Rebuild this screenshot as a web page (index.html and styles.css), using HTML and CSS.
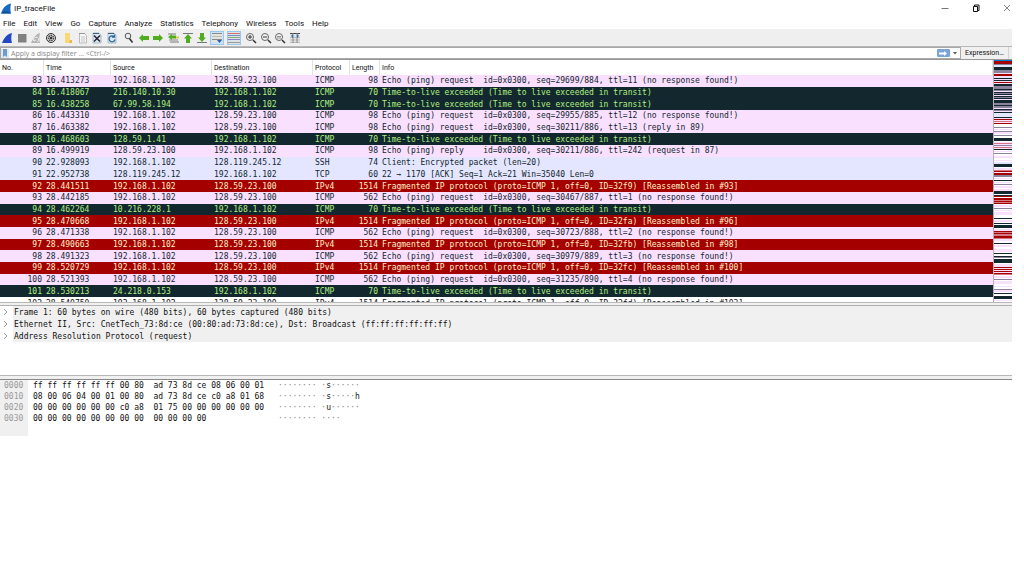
FILE: index.html
```html
<!DOCTYPE html>
<html lang="en">
<head>
  <meta charset="UTF-8" />
  <meta name="viewport" content="width=device-width, initial-scale=1.0" />
  <title>IP_traceFile</title>
  <link rel="stylesheet" href="styles.css">
</head>
<body>
  <header class="titlebar">
    <svg class="logo" viewBox="0 0 12 12"><path d="M0 11.500C2 5.500 5 1.500 11 .500C10 4 10 8 11 11.500z" fill="#1769c0"/><path d="M0 11.500C3 8 7 8 11 11.500z" fill="#0e4f98"/></svg>
    <h1>IP_traceFile</h1>
    <div class="window-buttons">
      <button aria-label="Minimize"><svg viewBox="0 0 8 8"><path d="M.500 4.500h7" stroke="#777"/></svg></button>
      <button aria-label="Restore"><svg viewBox="0 0 8 8"><path d="M1.500 2.500h4v5h-4zM2.500 2V1h4.500v5.500H6" fill="none" stroke="#111"/></svg></button>
      <button aria-label="Close"><svg viewBox="0 0 8 8"><path d="M1 1l6 6M7 1L1 7" stroke="#666" stroke-width=".8"/></svg></button>
    </div>
  </header>

  <nav class="menu">
    <a href="#">File</a>
    <a href="#">Edit</a>
    <a href="#">View</a>
    <a href="#">Go</a>
    <a href="#">Capture</a>
    <a href="#">Analyze</a>
    <a href="#">Statistics</a>
    <a href="#">Telephony</a>
    <a href="#">Wireless</a>
    <a href="#">Tools</a>
    <a href="#">Help</a>
  </nav>

  <div class="toolbar">
    <div class="group four">
      <button aria-label="Start capture"><svg viewBox="0 0 12 12"><path d="M1 11C3 6 6 2 11 1C10 4 10 8 11 11z" fill="#2448c4"/></svg></button>
      <button aria-label="Stop capture"><svg viewBox="0 0 12 12"><path d="M2 2h8.500v8.500H2z" fill="#808080"/></svg></button>
      <button aria-label="Restart capture"><svg viewBox="0 0 12 12"><path d="M1 11C3 6 6 2 10 1C9 4 9 8 10 11z" fill="#b4b4b4"/><path d="M4 9a2.500 2.500 0 1 1 3 1M3 7l1 2 2-1" fill="none" stroke="#eee"/></svg></button>
      <button aria-label="Capture options"><svg viewBox="0 0 12 12"><circle cx="6" cy="6" r="4.500" fill="#ddd" stroke="#333"/><circle cx="6" cy="6" r="2.500" fill="none" stroke="#444" stroke-width="1.500" stroke-dasharray="1.500 .700"/><circle cx="6" cy="6" r="1.300" fill="#333"/></svg></button>
    </div>
    <div class="group four">
      <button aria-label="Open"><svg viewBox="0 0 12 12"><path d="M3 1h5v7h2v3H3z" fill="#f8d878"/><path d="M8 8h2v3H7z" fill="#e8b84c"/></svg></button>
      <button aria-label="Save"><svg viewBox="0 0 12 12"><path d="M2.500 1.500h5l2 2v7.500h-7z" fill="#f6f6f6" stroke="#bbb"/><path d="M2 1.500h6" stroke="#999"/><path d="M4 5h4M4 7h4M4 9h4" stroke="#c4c4c4"/></svg></button>
      <button aria-label="Close file"><svg viewBox="0 0 12 12"><path d="M2 1h6l2 2v8H2z" fill="#dce8f0" stroke="#88a0b0" stroke-width=".6"/><path d="M2 1.500h6" stroke="#38627e"/><path d="M3 3.500l6 6M9 3.500l-6 6" stroke="#223" stroke-width="1.500"/></svg></button>
      <button aria-label="Reload"><svg viewBox="0 0 12 12"><path d="M2 1h6l2 2v8H2z" fill="#dce8f0" stroke="#88a0b0" stroke-width=".6"/><path d="M2 1.500h6" stroke="#38627e"/><path d="M8.500 5a3 3 0 1 0 .500 2.500M8.500 2.500V5H6" fill="none" stroke="#28669c" stroke-width="1.300"/></svg></button>
    </div>
    <div class="group seven">
      <button aria-label="Find packet"><svg viewBox="0 0 12 12"><circle cx="5" cy="4" r="2.800" fill="#e8eef2" stroke="#555"/><path d="M6.500 6.500l3 4" stroke="#333" stroke-width="1.600"/></svg></button>
      <button aria-label="Previous packet"><svg viewBox="0 0 12 12"><path d="M1 6l4-4v2h6v4H5v2z" fill="#52ac22"/></svg></button>
      <button aria-label="Next packet"><svg viewBox="0 0 12 12"><path d="M11 6L7 2v2H1v4h6v2z" fill="#52ac22"/></svg></button>
      <button aria-label="Go to packet"><svg viewBox="0 0 12 12"><path d="M1 2h8M3 10h9" stroke="#777"/><path d="M7 5.500h5" stroke="#e0c850" stroke-width="2"/><path d="M2 8h9" stroke="#888"/><path d="M1 5l4-3v1.500h4v3H5V8z" fill="#52ac22"/></svg></button>
      <button aria-label="First packet"><svg viewBox="0 0 12 12"><path d="M1 1.500h10" stroke="#777"/><path d="M6 2l4 4.500H8V11H4V6.500H2z" fill="#52ac22"/></svg></button>
      <button aria-label="Last packet"><svg viewBox="0 0 12 12"><path d="M1 10.500h10" stroke="#777"/><path d="M6 10l4-4.500H8V1H4v4.500H2z" fill="#52ac22"/></svg></button>
      <button class="pressed" aria-label="Auto scroll"><svg viewBox="0 0 12 12"><path d="M1 1h10v9H1z" fill="#e4e4dc"/><path d="M1 1.500h10M1 7.500h10" stroke="#888"/><path d="M1 4.500h10" stroke="#bbb"/><path d="M6 8h5L8.500 11z" fill="#2d5eac"/></svg></button>
    </div>
    <div class="group">
      <button class="pressed" aria-label="Colorize"><svg viewBox="0 0 12 12"><path d="M0 0h12v12H0z" fill="#dce4e8"/><path d="M0 1.500h12" stroke="#d07070"/><path d="M0 3.500h12" stroke="#6c90c8"/><path d="M0 5.500h12" stroke="#80b080"/><path d="M0 7.500h12" stroke="#8c80c0"/><path d="M0 10.500h12" stroke="#999"/></svg></button>
    </div>
    <div class="group four">
      <button aria-label="Zoom in"><svg viewBox="0 0 12 12"><circle cx="5" cy="5" r="3.500" fill="#f4f4f4" stroke="#666"/><path d="M3 5h4M5 3v4" stroke="#333"/><path d="M8 8l3 3" stroke="#333" stroke-width="1.500"/></svg></button>
      <button aria-label="Zoom out"><svg viewBox="0 0 12 12"><circle cx="5" cy="5" r="3.500" fill="#f4f4f4" stroke="#666"/><path d="M3 5h4" stroke="#333"/><path d="M8 8l3 3" stroke="#333" stroke-width="1.500"/></svg></button>
      <button aria-label="Normal size"><svg viewBox="0 0 12 12"><circle cx="5" cy="5" r="3.500" fill="#f4f4f4" stroke="#666"/><path d="M3 4.500h4M3 6h4" stroke="#777" stroke-width=".8"/><path d="M8 8l3 3" stroke="#333" stroke-width="1.500"/></svg></button>
      <button aria-label="Resize columns"><svg viewBox="0 0 12 12"><path d="M1 1h10v10H1z" fill="#e4e4e4"/><path d="M1 1.500h10" stroke="#444"/><path d="M1 10.500h10M1 5.500h10M1 8h10" stroke="#bbb"/><path d="M4 1v10M8 1v10" stroke="#888"/><path d="M2 4l2-2v4zM10 4L8 2v4z" fill="#2d6cb4"/></svg></button>
    </div>
  </div>

  <form class="filter">
    <div class="filter-box">
      <svg class="bookmark" viewBox="0 0 6 9"><path d="M1 0h4v8L3 6.500 1 8z" fill="#6c9cd0"/></svg>
      <input type="text" aria-label="Display filter" placeholder="Apply a display filter … &lt;Ctrl-/&gt;">
      <button type="button" class="apply" aria-label="Apply filter"><svg viewBox="0 0 12 7"><path d="M2 3.500h6" stroke="#fff" stroke-width="2"/><path d="M7 1l3 2.500L7 6z" fill="#fff"/></svg></button>
      <button type="button" class="recent" aria-label="Recent filters"><svg viewBox="0 0 6 4"><path d="M1 1h4L3 3.500z" fill="#555"/></svg></button>
    </div>
    <button type="button" class="expression">Expression…</button>
  </form>

  <main>
    <section class="packets">
      <div class="packet-list">
        <table>
          <colgroup>
            <col class="c-no"><col class="c-time"><col class="c-addr"><col class="c-addr"><col class="c-proto"><col class="c-len"><col>
          </colgroup>
          <thead>
            <tr><th>No.</th><th>Time</th><th>Source</th><th>Destination</th><th>Protocol</th><th>Length</th><th>Info</th></tr>
          </thead>
          <tbody>
            <tr class="icmp"><td>83</td><td>16.413273</td><td>192.168.1.102</td><td>128.59.23.100</td><td>ICMP</td><td>98</td><td>Echo (ping) request  id=0x0300, seq=29699/884, ttl=11 (no response found!)</td></tr>
            <tr class="error"><td>84</td><td>16.418067</td><td>216.140.10.30</td><td>192.168.1.102</td><td>ICMP</td><td>70</td><td>Time-to-live exceeded (Time to live exceeded in transit)</td></tr>
            <tr class="error"><td>85</td><td>16.438258</td><td>67.99.58.194</td><td>192.168.1.102</td><td>ICMP</td><td>70</td><td>Time-to-live exceeded (Time to live exceeded in transit)</td></tr>
            <tr class="icmp"><td>86</td><td>16.443310</td><td>192.168.1.102</td><td>128.59.23.100</td><td>ICMP</td><td>98</td><td>Echo (ping) request  id=0x0300, seq=29955/885, ttl=12 (no response found!)</td></tr>
            <tr class="icmp"><td>87</td><td>16.463382</td><td>192.168.1.102</td><td>128.59.23.100</td><td>ICMP</td><td>98</td><td>Echo (ping) request  id=0x0300, seq=30211/886, ttl=13 (reply in 89)</td></tr>
            <tr class="error"><td>88</td><td>16.468603</td><td>128.59.1.41</td><td>192.168.1.102</td><td>ICMP</td><td>70</td><td>Time-to-live exceeded (Time to live exceeded in transit)</td></tr>
            <tr class="icmp"><td>89</td><td>16.499919</td><td>128.59.23.100</td><td>192.168.1.102</td><td>ICMP</td><td>98</td><td>Echo (ping) reply    id=0x0300, seq=30211/886, ttl=242 (request in 87)</td></tr>
            <tr class="tcp"><td>90</td><td>22.928093</td><td>192.168.1.102</td><td>128.119.245.12</td><td>SSH</td><td>74</td><td>Client: Encrypted packet (len=20)</td></tr>
            <tr class="tcp"><td>91</td><td>22.952738</td><td>128.119.245.12</td><td>192.168.1.102</td><td>TCP</td><td>60</td><td>22 → 1170 [ACK] Seq=1 Ack=21 Win=35040 Len=0</td></tr>
            <tr class="frag"><td>92</td><td>28.441511</td><td>192.168.1.102</td><td>128.59.23.100</td><td>IPv4</td><td>1514</td><td>Fragmented IP protocol (proto=ICMP 1, off=0, ID=32f9) [Reassembled in #93]</td></tr>
            <tr class="icmp"><td>93</td><td>28.442185</td><td>192.168.1.102</td><td>128.59.23.100</td><td>ICMP</td><td>562</td><td>Echo (ping) request  id=0x0300, seq=30467/887, ttl=1 (no response found!)</td></tr>
            <tr class="error"><td>94</td><td>28.462264</td><td>10.216.228.1</td><td>192.168.1.102</td><td>ICMP</td><td>70</td><td>Time-to-live exceeded (Time to live exceeded in transit)</td></tr>
            <tr class="frag"><td>95</td><td>28.470668</td><td>192.168.1.102</td><td>128.59.23.100</td><td>IPv4</td><td>1514</td><td>Fragmented IP protocol (proto=ICMP 1, off=0, ID=32fa) [Reassembled in #96]</td></tr>
            <tr class="icmp"><td>96</td><td>28.471338</td><td>192.168.1.102</td><td>128.59.23.100</td><td>ICMP</td><td>562</td><td>Echo (ping) request  id=0x0300, seq=30723/888, ttl=2 (no response found!)</td></tr>
            <tr class="frag"><td>97</td><td>28.490663</td><td>192.168.1.102</td><td>128.59.23.100</td><td>IPv4</td><td>1514</td><td>Fragmented IP protocol (proto=ICMP 1, off=0, ID=32fb) [Reassembled in #98]</td></tr>
            <tr class="icmp"><td>98</td><td>28.491323</td><td>192.168.1.102</td><td>128.59.23.100</td><td>ICMP</td><td>562</td><td>Echo (ping) request  id=0x0300, seq=30979/889, ttl=3 (no response found!)</td></tr>
            <tr class="frag"><td>99</td><td>28.520729</td><td>192.168.1.102</td><td>128.59.23.100</td><td>IPv4</td><td>1514</td><td>Fragmented IP protocol (proto=ICMP 1, off=0, ID=32fc) [Reassembled in #100]</td></tr>
            <tr class="icmp"><td>100</td><td>28.521393</td><td>192.168.1.102</td><td>128.59.23.100</td><td>ICMP</td><td>562</td><td>Echo (ping) request  id=0x0300, seq=31235/890, ttl=4 (no response found!)</td></tr>
            <tr class="error"><td>101</td><td>28.530213</td><td>24.218.0.153</td><td>192.168.1.102</td><td>ICMP</td><td>70</td><td>Time-to-live exceeded (Time to live exceeded in transit)</td></tr>
            <tr><td>102</td><td>28.540750</td><td>192.168.1.102</td><td>128.59.23.100</td><td>IPv4</td><td>1514</td><td>Fragmented IP protocol (proto=ICMP 1, off=0, ID=32fd) [Reassembled in #103]</td></tr>
          </tbody>
        </table>
      </div>
      <!-- packet colours along the scroll bar -->
      <svg class="minimap" viewBox="0 0 18 242" preserveAspectRatio="none" shape-rendering="crispEdges">
        <path fill="#fff" d="M0 0h18v242H0z"/>
        <path fill="#fae0ff" d="M0 4h18v60H0zM0 69h18v1H0zM0 72h18v2H0zM0 82h18v7H0zM0 91h18v1H0zM0 96h18v2H0zM0 100h18v1H0zM0 108h18v8H0zM0 118h18v1H0zM0 122h18v1H0zM0 126h18v2H0zM0 129h18v2H0zM0 145h18v2H0zM0 150h18v1H0zM0 152h18v3H0zM0 160h18v2H0zM0 169h18v2H0zM0 179h18v2H0zM0 185h18v2H0zM0 189h18v3H0zM0 204h18v11H0zM0 216h18v2H0zM0 221h18v3H0zM0 226h18v1H0zM0 230h18v2H0zM0 240h18v1H0z"/>
        <path fill="#e4e6ff" d="M0 5h18v2H0zM0 17h18v1H0zM0 52h18v5H0zM0 102h18v2H0z"/>
        <path fill="#8c849e" d="M0 4h18v1H0zM0 10h18v3H0zM0 26h18v5H0zM0 33h18v1H0zM0 37h18v1H0zM0 43h18v5H0zM0 50h18v1H0zM0 67h18v1H0zM0 71h18v1H0zM0 75h18v1H0zM0 85h18v1H0zM0 93h18v1H0zM0 115h18v2H0zM0 124h18v1H0zM0 148h18v1H0zM0 197h18v1H0zM0 219h18v1H0zM0 229h18v1H0z"/>
        <path fill="#12272e" d="M0 7h18v3H0zM0 18h18v1H0zM0 20h18v1H0zM0 24h18v2H0zM0 29h18v1H0zM0 32h18v1H0zM0 34h18v1H0zM0 36h18v1H0zM0 38h18v1H0zM0 40h18v3H0zM0 45h18v1H0zM0 49h18v1H0zM0 52h18v1H0zM0 57h18v1H0zM0 78h18v3H0zM0 89h18v1H0zM0 104h18v3H0zM0 120h18v1H0zM0 131h18v3H0zM0 135h18v1H0zM0 158h18v1H0zM0 163h18v1H0zM0 165h18v3H0zM0 183h18v1H0zM0 193h18v1H0zM0 196h18v1H0zM0 199h18v4H0zM0 233h18v1H0zM0 236h18v3H0z"/>
        <path fill="#d47884" d="M0 61h18v1H0zM0 83h18v1H0zM0 87h18v1H0zM0 110h18v1H0zM0 138h18v5H0zM0 171h18v5H0zM0 178h18v1H0zM0 214h18v1H0z"/>
        <path fill="#a40000" d="M0 1h18v3H0zM0 14h18v2H0zM0 22h18v1H0zM0 59h18v1H0zM0 63h18v1H0zM0 111h18v1H0zM0 113h18v2H0zM0 136h18v1H0zM0 138h18v2H0zM0 141h18v1H0zM0 143h18v1H0zM0 171h18v1H0zM0 173h18v1H0zM0 176h18v2H0zM0 207h18v1H0zM0 209h18v1H0zM0 211h18v1H0zM0 213h18v1H0z"/>
        <path fill="#0078d7" d="M0 0h18v1H0z"/>
      </svg>
    </section>

    <section class="details">
      <ul>
        <li><svg viewBox="0 0 6 8"><path d="M1 1l3 3-3 3" fill="none" stroke="#999"/></svg><span>Frame 1: 60 bytes on wire (480 bits), 60 bytes captured (480 bits)</span></li>
        <li><svg viewBox="0 0 6 8"><path d="M1 1l3 3-3 3" fill="none" stroke="#999"/></svg><span>Ethernet II, Src: CnetTech_73:8d:ce (00:80:ad:73:8d:ce), Dst: Broadcast (ff:ff:ff:ff:ff:ff)</span></li>
        <li><svg viewBox="0 0 6 8"><path d="M1 1l3 3-3 3" fill="none" stroke="#999"/></svg><span>Address Resolution Protocol (request)</span></li>
      </ul>
    </section>

    <section class="bytes">
<pre class="offsets">0000
0010
0020
0030</pre>
<pre class="hex">ff ff ff ff ff ff 00 80  ad 73 8d ce 08 06 00 01
08 00 06 04 00 01 00 80  ad 73 8d ce c0 a8 01 68
00 00 00 00 00 00 c0 a8  01 75 00 00 00 00 00 00
00 00 00 00 00 00 00 00  00 00 00 00</pre>
<pre class="ascii">········ ·<b>s</b>······
········ ·<b>s</b>·····<b>h</b>
········ ·<b>u</b>······
········ ····</pre>
    </section>
  </main>
</body>
</html>
```

FILE: styles.css
```css
body {
  margin: 0;
  padding-right: 12px;
  background: #fff;
  color: #111;
  font-family: Roboto, "Open Sans", sans-serif;
  font-size: 8px;
}
button {
  padding: 0;
  border: none;
  background: none;
  font: inherit;
  color: inherit;
}
svg {
  display: block;
}

.titlebar {
  display: flex;
  align-items: center;
  height: 16px;
  padding: 0 1px;
}
.logo {
  width: 11px;
  height: 11px;
}
.titlebar h1 {
  margin: 0 0 0 2px;
  font-size: 8px;
  font-weight: normal;
}
.window-buttons {
  display: flex;
  gap: 23px;
  margin-left: auto;
}
.window-buttons svg {
  width: 8px;
  height: 8px;
}

.menu {
  display: flex;
  gap: 8px;
  height: 13px;
  padding-left: 3px;
  line-height: 15px;
}
.menu a {
  color: #111;
  text-decoration: none;
}

.toolbar {
  display: flex;
  align-items: center;
  gap: 3px;
  height: 17px;
  background: #efefef;
  border-bottom: 1px solid #b8b8b8;
}
.group {
  display: flex;
  justify-content: space-between;
}
.group button {
  display: flex;
  align-items: center;
  justify-content: center;
  width: 14px;
  height: 14px;
}
.group svg {
  width: 12px;
  height: 12px;
}
.group .pressed {
  background: #cce4f7;
  box-shadow: inset 0 0 0 1px #98c8ee;
}
.four {
  width: 58px;
}
.seven {
  width: 102px;
}

.filter {
  display: flex;
  height: 12px;
  background: #f0f0f0;
  border-bottom: 1px solid #999;
}
.filter-box {
  display: flex;
  flex: 1;
  align-items: center;
  box-sizing: border-box;
  border: 1px solid #a8a8a8;
  background: #fff;
}
.bookmark {
  width: 6px;
  height: 9px;
  padding: 0 1px;
  background: #e0e8f0;
}
.filter input {
  flex: 1;
  min-width: 0;
  height: 10px;
  padding: 0 2px;
  border: none;
  outline: none;
  font-family: "Open Sans", sans-serif;
  font-size: 7px;
}
.filter input::placeholder {
  color: #888;
}
.apply {
  width: 13px;
  height: 8px;
  background: #78a4d8;
  border-radius: 1px;
}
.apply svg {
  width: 12px;
  height: 7px;
}
.recent {
  width: 10px;
}
.recent svg {
  width: 6px;
  height: 4px;
  margin: 0 auto;
}
.expression {
  width: 48px;
  margin-right: 3px;
  padding-left: 4px;
  border-right: 1px solid #d4d4d4;
  font-size: 7px;
  text-align: left;
}

.packets {
  display: flex;
  height: 242px;
  border-bottom: 1px solid #b8b8b8;
}
.packet-list {
  flex: 1;
  min-width: 0;
  overflow: hidden;
}
/* the last row is cut off by the pane */
.packet-list table {
  width: 100%;
  height: 249px;
  border-collapse: collapse;
  table-layout: fixed;
}
.c-no {
  width: 44px;
}
.c-time {
  width: 67px;
}
.c-addr {
  width: 101px;
}
.c-proto {
  width: 37px;
}
.c-len {
  width: 30px;
}
.packet-list th {
  height: 14px;
  padding: 1px 2px 0;
  box-shadow: inset -1px 0 #e2e2e2;
  font-size: 7px;
  font-weight: normal;
  line-height: 10px;
  text-align: left;
}
.packet-list td {
  padding: 1px 2px 0;
  font-family: "DejaVu Sans Mono", monospace;
  font-size: 8px;
  line-height: 10px;
  white-space: pre;
}
.packet-list td:first-child,
.packet-list td:nth-child(6) {
  text-align: right;
}
.icmp {
  background: #fae0ff;
  color: #12272e;
}
.error {
  background: #12272e;
  color: #b0f080;
}
.tcp {
  background: #e4e6ff;
  color: #12272e;
}
.frag {
  background: #a40000;
  color: #fff0c8;
}
.minimap {
  width: 18px;
  height: 242px;
  border-left: 1px solid #b8b0b8;
}

.details {
  height: 69px;
  margin-top: 2px;
  border-top: 1px solid #b0b0b0;
  border-bottom: 1px solid #b8b8b8;
  box-shadow: 0 -2px #f0f0f0;
}
.details ul {
  margin: 0;
  padding: 0;
  list-style: none;
}
.details li {
  display: flex;
  align-items: center;
  height: 12px;
  padding-left: 3px;
  font-family: "DejaVu Sans Mono", monospace;
}
.details li svg {
  width: 6px;
  height: 8px;
}
.details li span {
  flex: 1;
  margin-left: 4px;
  padding: 1px 0 0 1px;
  background: #f0f0f0;
  line-height: 11px;
}

.bytes {
  display: flex;
  margin-top: 3px;
  border-top: 1px solid #888;
  box-shadow: 0 -3px #f0f0f0;
}
.bytes pre {
  margin: 0;
  font-family: "DejaVu Sans Mono", monospace;
  font-size: 8px;
  line-height: 11px;
}
.bytes .offsets {
  width: 24px;
  padding: 0 0 12px 4px;
  background: #f0f0f0;
  color: #999;
}
.hex {
  width: 240px;
  padding: 0 0 0 5px;
}
.ascii {
  padding-left: 5px;
  color: #888;
}
.ascii b {
  color: #111;
  font-weight: normal;
}
```
